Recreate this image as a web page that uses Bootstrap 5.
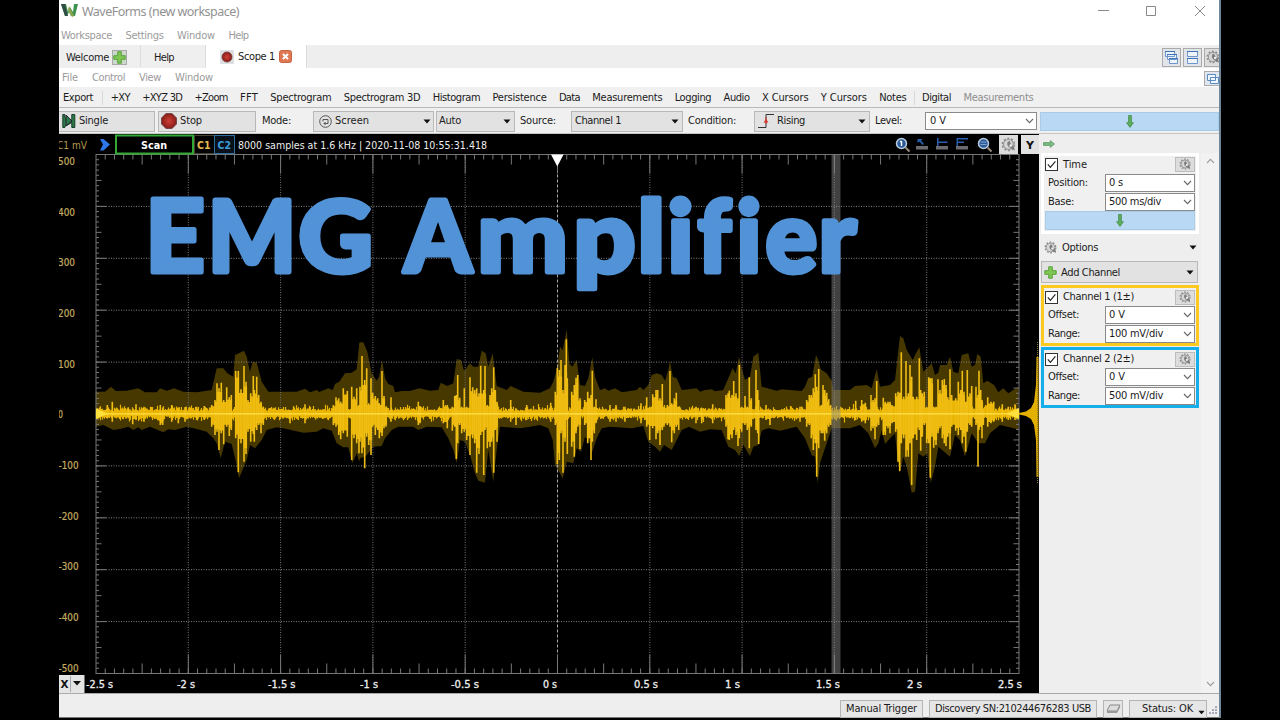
<!DOCTYPE html>
<html lang="en">
<head>
<meta charset="utf-8">
<title>WaveForms (new workspace)</title>
<link href="https://cdn.jsdelivr.net/npm/bootstrap@5.3.0/dist/css/bootstrap.min.css" rel="stylesheet">
<style>
body{background:#000;width:1280px;height:720px;overflow:hidden;font-family:"DejaVu Sans Condensed","DejaVu Sans",sans-serif;font-size:11px;line-height:14px;color:#1b1b1b}
svg{display:block;flex:none}
[data-w]{display:inline-block;flex:none;white-space:nowrap}
.win{width:1162px;height:718px;margin-left:59px;background:#fff;border-right:2px solid #70879a;border-bottom:1px solid #777}
.titlebar{height:25px}
.titlebar .cap{font-family:"Noto Sans",sans-serif;font-size:12.5px;color:#929292}
.menurow{height:20px;color:#9b9b9b}
.tabrow{height:23px;background:#eee}
.tabitem{height:22px;border-right:1px solid #dcdcdc;background:#efefef}
.tabitem.on{background:#fff;height:23px}
.tools{height:21px;background:#f0f0f0;border-bottom:1px solid #b9b9b9;padding-top:2px}
.vsep{width:1px;height:14px;background:#d8d8d8}
.ctl{height:26px;background:#f0f0f0;border-bottom:1px solid #c4c4c4;padding-top:1px}
.pbtn{background:#e2e2e2;border:1px solid #b8b8b8;height:21px}
.field{background:#fff;border:1px solid #8a8a8a;height:18px}
.blue{background:#b9d8f3;border:1px solid #a9cbea}
.scope{width:980px;height:559px;background:#000;color:#fff}
.side{width:180px;background:#eee}
.grp{width:158px;border:3px solid #fff;background:#f0f0f0;padding:1px 1px 0 1px}
.chk{width:13px;height:13px;border:1px solid #333;background:#fff}
.gbtn{width:20px;height:15px;border:1px solid #bdbdbd;background:#ddd}
.statusrow{height:24px;background:#eee;border-top:1px solid #aaa}
.sbtn{height:18px;border:1px solid #b5b5b5;background:#e6e6e6}
</style>
</head>
<body>
<svg width="0" height="0" class="position-absolute">
<defs>
<symbol id="gear" viewBox="0 0 14 14"><circle cx="6.500" cy="6.500" r="4.300" fill="#d6d6d6" stroke="#999" stroke-width="1"/><circle cx="6.500" cy="6.500" r="5.300" fill="none" stroke="#8c8c8c" stroke-width="1.300" stroke-dasharray="1.800 1.530"/><path d="M7.500 3.500C4.500 4 5 8 8 9.500l4 2.500-.5-3.500-2.500-2z" fill="#7c7c7c"/><circle cx="8.500" cy="7.500" r="1.200" fill="#ededed"/></symbol>
<symbol id="caret" viewBox="0 0 8 5"><path d="M.5.5h7L4 4.5z" fill="#111"/></symbol>
<symbol id="chev" viewBox="0 0 9 6"><path d="M1 1l3.5 3.6L8 1" fill="none" stroke="#666" stroke-width="1.1"/></symbol>
<symbol id="down" viewBox="0 0 8 13"><path d="M2.6.5h2.8v7.2h2L4 12.4.6 7.7h2z" fill="#5fae5f" stroke="#39843c" stroke-width=".7"/></symbol>
<symbol id="right" viewBox="0 0 12 8"><path d="M.5 2.6h6.8v-2L11.5 4 7.3 7.4v-2H.5z" fill="#7fb983" stroke="#4d9155" stroke-width=".7"/></symbol>
<symbol id="plus" viewBox="0 0 13 13"><path d="M4.7.8h3.6v3.9h3.9v3.6H8.3v3.9H4.7V8.3H.8V4.7h3.9z" fill="#7fc751" stroke="#4e9c35" stroke-width=".9"/></symbol>
<symbol id="tick" viewBox="0 0 11 11"><path d="M1.8 5.4l2.6 2.9 5-6" fill="none" stroke="#222" stroke-width="1.2"/></symbol>
<radialGradient id="red"><stop offset="0" stop-color="#cc4036"/><stop offset="1" stop-color="#8d1d19"/></radialGradient>
<symbol id="oct" viewBox="0 0 16 16"><path d="M4.9.6h6.2l4.3 4.3v6.2l-4.3 4.3H4.900L.6 11.1V4.9z" fill="url(#red)" stroke="#6d4140" stroke-width="1"/></symbol>
<symbol id="ball" viewBox="0 0 12 12"><circle cx="6" cy="6" r="5" fill="url(#red)" stroke="#6d3a38" stroke-width=".8"/></symbol>
</defs></svg>

<main class="win d-flex flex-column">
  <header class="titlebar d-flex align-items-start">
    <svg width="19" height="17" viewBox="0 0 19 17" style="margin-top:3px"><path d="M2 1h5l2 8 2-5 3 5 1-8h4l-3 12h-4l-2-4-2 4H6z" fill="#3e9150"/><path d="M2 1h4l3 12H6z" fill="#2f4e44"/><path d="M10 3l5 10-2 1-4-7z" fill="#8da74a"/></svg>
    <span class="cap" style="margin:5px 0 0 4px" data-w="157">WaveForms (new workspace)</span>
    <svg width="112" height="20" viewBox="0 0 112 20" class="ms-auto" style="margin-right:9px" fill="none" stroke="#888" stroke-width="1"><path d="M0 10.500h11M48.500 6.500h9v9h-9zM97 6l10 10M107 6l-10 10"/></svg>
  </header>
  <nav class="menurow d-flex align-items-center" style="padding:3px 0 0 2px;gap:13.500px"><span data-w="51">Workspace</span><span data-w="38">Settings</span><span data-w="38">Window</span><span data-w="20">Help</span></nav>
  <div class="tabrow d-flex">
    <div class="tabitem d-flex align-items-center" style="width:82px;padding:4px 0 0 7px;gap:4px"><span data-w="43">Welcome</span><svg width="13" height="13" style="background:#ccd8c8;outline:1px solid #aaa"><use href="#plus"/></svg></div>
    <div class="tabitem d-flex align-items-center" style="width:65px;padding:4px 0 0 13px"><span data-w="20">Help</span></div>
    <div class="tabitem on d-flex align-items-center" style="width:101px;padding:1px 0 0 14px"><span class="border" style="background:#ddd"><svg width="12" height="12"><use href="#ball"/></svg></span><span class="ms-1" data-w="37">Scope 1</span><svg width="13" height="13" viewBox="0 0 13 13" style="margin-left:4px"><rect x=".5" y=".5" width="12" height="12" rx="2" fill="#e07953" stroke="#c76442"/><path d="M4 4l5 5M9 4L4 9" stroke="#fff" stroke-width="2"/></svg></div>
    <div class="ms-auto d-flex align-items-center" style="gap:2px;padding-top:2px">
      <svg width="19" height="19" viewBox="0 0 19 19"><rect x=".5" y=".5" width="18" height="18" fill="#e1e5ea" stroke="#aaa"/><g fill="#eef4fb" stroke="#6d97cc"><path d="M3.500 3.500h9v5h-9zM5.500 6.500h9v5h-9zM7.500 10.500h8v5h-8z"/></g><path d="M3 3.500h10M5 6.500h10M7 10.500h9" stroke="#3f74bb"/></svg>
      <svg width="19" height="19" viewBox="0 0 19 19"><rect x=".5" y=".5" width="18" height="18" fill="#e1e5ea" stroke="#aaa"/><g fill="#eef4fb" stroke="#6d97cc"><path d="M4.500 3.500h10v5h-10zM4.500 10.500h10v5h-10z"/></g><path d="M4 3.500h11M4 10.500h11" stroke="#3f74bb"/></svg>
      <svg width="15" height="19" viewBox="0 0 15 19"><rect x=".5" y=".5" width="18" height="18" fill="#ddd" stroke="#aaa"/><use href="#gear" x="2" y="2" width="15" height="15"/></svg>
    </div>
  </div>
  <nav class="menurow d-flex align-items-center" style="padding:2px 0 0 3px;gap:14px"><span data-w="16">File</span><span data-w="33">Control</span><span data-w="22">View</span><span data-w="38">Window</span>
    <svg class="ms-auto" width="15" height="15" viewBox="0 0 15 15"><rect x=".5" y=".5" width="16" height="14" fill="#dfe6ee" stroke="#aaa"/><path d="M3.500 3.500h8v6h-8zM6.500 6.500h8v6h-8z" fill="#eef6ff" stroke="#5b89c4"/></svg></nav>
  <nav class="tools d-flex align-items-center" style="padding-left:4px;gap:12.4px">
    <span data-w="30">Export</span><span class="vsep" style="margin:0 -5px 0 -3px"></span><span data-w="19">+XY</span><span data-w="40">+XYZ 3D</span><span data-w="33">+Zoom</span><span data-w="18">FFT</span><span data-w="61">Spectrogram</span><span data-w="76.500">Spectrogram 3D</span><span data-w="47.500">Histogram</span><span data-w="54">Persistence</span><span data-w="21">Data</span><span data-w="70">Measurements</span><span data-w="36.500">Logging</span><span data-w="26">Audio</span><span data-w="46.500">X Cursors</span><span data-w="46">Y Cursors</span><span data-w="27">Notes</span><span class="vsep" style="margin:0 -5px 0 -5px"></span><span data-w="29">Digital</span><span data-w="70" style="color:#8d8d8d">Measurements</span>
  </nav>
  <div class="ctl d-flex align-items-center">
    <div class="pbtn d-flex align-items-center border-start-0" style="width:96px;padding-left:3px"><svg width="14" height="16" viewBox="0 0 14 16"><path d="M.8 1.500h2v3l7 4V1.500h3v13h-3v-5l-7 4v1h-2z" fill="#2d7b48" stroke="#183c29"/><path d="M4 2v11l6-5z" fill="#2d7b48" stroke="#223"/></svg><span style="margin-left:3px" data-w="29">Single</span></div>
    <div class="pbtn d-flex align-items-center" style="width:98px;margin-left:3px;padding-left:2px"><svg width="16" height="16"><use href="#oct"/></svg><span style="margin-left:3px" data-w="22">Stop</span></div>
    <span style="margin-left:6px" data-w="29">Mode:</span>
    <div class="pbtn d-flex align-items-center" style="width:121px;margin-left:22px;padding:0 2px 0 5px"><svg width="13" height="13" viewBox="0 0 13 13" fill="none" stroke="#555"><circle cx="6.500" cy="6.500" r="5.800"/><path d="M4 6.500V4.500h5v4H5M6.500 7L5 8.500 6.500 10"/></svg><span style="margin-left:3px" data-w="34">Screen</span><svg class="ms-auto" width="8" height="5"><use href="#caret"/></svg></div>
    <div class="pbtn d-flex align-items-center" style="width:79px;margin-left:2px;padding:0 3px 0 2px"><span data-w="22">Auto</span><svg class="ms-auto" width="8" height="5"><use href="#caret"/></svg></div>
    <span style="margin-left:5px" data-w="36">Source:</span>
    <div class="pbtn d-flex align-items-center" style="width:112px;margin-left:15px;padding:0 3px"><span data-w="46">Channel 1</span><svg class="ms-auto" width="8" height="5"><use href="#caret"/></svg></div>
    <span style="margin-left:5px" data-w="48">Condition:</span>
    <div class="pbtn d-flex align-items-center" style="width:116px;margin-left:18px;padding:0 3px"><svg width="17" height="18" viewBox="0 0 17 18" fill="none"><path d="M0 15.500h8V2.500h8" stroke="#333"/><path d="M8 5v7" stroke="#d23a32" stroke-width="1"/><path d="M5.500 10.500L8 7l2.500 3.500z" fill="#d9342d"/></svg><span style="margin-left:2px" data-w="28">Rising</span><svg class="ms-auto" width="8" height="5"><use href="#caret"/></svg></div>
    <span style="margin-left:5px" data-w="27">Level:</span>
    <div class="field d-flex align-items-center" style="width:112px;margin-left:23px;padding:0 2px 0 4px"><span data-w="16">0 V</span><svg class="ms-auto" width="9" height="6"><use href="#chev"/></svg></div>
    <div class="blue d-flex align-items-center justify-content-center flex-grow-1" style="height:19px;margin-left:3px"><svg width="8" height="13"><use href="#down"/></svg></div>
  </div>
  <section class="d-flex" style="height:559px">
    <div class="scope"><svg id="plot" width="980" height="559" viewBox="59 134 980 559"></svg></div>
    <aside class="side d-flex flex-column">
      <div class="d-flex align-items-center" style="height:19px;padding-left:4px"><svg width="12" height="8"><use href="#right"/></svg></div>
      <div class="d-flex flex-grow-1">
        <div class="d-flex flex-column" style="width:162px;padding-left:2px">
          <div class="grp" style="height:81px"><div class="d-flex align-items-center" style="height:15px"><span class="chk"><svg width="11" height="11"><use href="#tick"/></svg></span><span style="margin-left:5px" data-w="24">Time</span><span class="gbtn ms-auto d-flex justify-content-center"><svg width="13" height="13"><use href="#gear"/></svg></span></div>
            <div class="d-flex align-items-center justify-content-between" style="height:19px;padding-left:3px;margin-top:1px"><span data-w="40">Position:</span><span class="field d-flex align-items-center" style="width:90px;padding:0 2px 0 3px"><span data-w="14">0 s</span><svg class="ms-auto" width="9" height="6"><use href="#chev"/></svg></span></div>
            <div class="d-flex align-items-center justify-content-between" style="height:19px;padding-left:3px"><span data-w="26">Base:</span><span class="field d-flex align-items-center" style="width:90px;padding:0 2px 0 3px"><span data-w="52">500 ms/div</span><svg class="ms-auto" width="9" height="6"><use href="#chev"/></svg></span></div>
            <div class="blue d-flex align-items-center justify-content-center" style="height:19px"><svg width="8" height="13"><use href="#down"/></svg></div></div>
          <div class="d-flex align-items-center" style="height:27px;padding:0 4px 0 3px"><svg width="14" height="14"><use href="#gear"/></svg><span style="margin-left:4px" data-w="36">Options</span><svg class="ms-auto" width="8" height="5"><use href="#caret"/></svg></div>
          <div class="pbtn d-flex align-items-center" style="width:157px;height:22px;padding:1px 3px 0 2px"><svg width="13" height="13"><use href="#plus"/></svg><span style="margin-left:4px" data-w="59">Add Channel</span><svg class="ms-auto" width="8" height="5"><use href="#caret"/></svg></div>
          <div class="grp" style="height:61px;margin-top:2px;border-color:#fbc91f"><div class="d-flex align-items-center" style="height:16px"><span class="chk"><svg width="11" height="11"><use href="#tick"/></svg></span><span style="margin-left:5px" data-w="71">Channel 1 (1±)</span><span class="gbtn ms-auto d-flex justify-content-center"><svg width="13" height="13"><use href="#gear"/></svg></span></div>
            <div class="d-flex align-items-center justify-content-between" style="height:19px;padding-left:3px"><span data-w="31">Offset:</span><span class="field d-flex align-items-center" style="width:90px;padding:0 2px 0 3px"><span data-w="16">0 V</span><svg class="ms-auto" width="9" height="6"><use href="#chev"/></svg></span></div>
            <div class="d-flex align-items-center justify-content-between" style="height:19px;padding-left:3px"><span data-w="32">Range:</span><span class="field d-flex align-items-center" style="width:90px;padding:0 2px 0 3px"><span data-w="54">100 mV/div</span><svg class="ms-auto" width="9" height="6"><use href="#chev"/></svg></span></div></div>
          <div class="grp" style="height:61px;margin-top:1px;border-color:#16aeea"><div class="d-flex align-items-center" style="height:16px"><span class="chk"><svg width="11" height="11"><use href="#tick"/></svg></span><span style="margin-left:5px" data-w="71">Channel 2 (2±)</span><span class="gbtn ms-auto d-flex justify-content-center"><svg width="13" height="13"><use href="#gear"/></svg></span></div>
            <div class="d-flex align-items-center justify-content-between" style="height:19px;padding-left:3px"><span data-w="31">Offset:</span><span class="field d-flex align-items-center" style="width:90px;padding:0 2px 0 3px"><span data-w="16">0 V</span><svg class="ms-auto" width="9" height="6"><use href="#chev"/></svg></span></div>
            <div class="d-flex align-items-center justify-content-between" style="height:19px;padding-left:3px"><span data-w="32">Range:</span><span class="field d-flex align-items-center" style="width:90px;padding:0 2px 0 3px"><span data-w="54">500 mV/div</span><svg class="ms-auto" width="9" height="6"><use href="#chev"/></svg></span></div></div>
        </div>
        <div class="d-flex flex-column justify-content-between align-items-center" style="width:18px;background:#f2f2f2;padding:5px 0 6px"><svg width="9" height="6" opacity=".6" style="transform:scaleY(-1)"><use href="#chev"/></svg><svg width="9" height="6" opacity=".6"><use href="#chev"/></svg></div>
      </div>
    </aside>
  </section>
  <footer class="statusrow d-flex align-items-center justify-content-end" style="padding:6px 1px 0 0">
    <div class="sbtn d-flex align-items-center justify-content-center" style="width:83px;margin-right:6px"><span data-w="71">Manual Trigger</span></div>
    <div class="sbtn d-flex align-items-center justify-content-center" style="width:168px;margin-right:6px"><span data-w="156">Discovery SN:210244676283 USB</span></div>
    <div class="sbtn d-flex align-items-center justify-content-center" style="width:20px;margin-right:6px"><svg width="15" height="10" viewBox="0 0 15 10"><path d="M4 1h10l-3 6H1z" fill="#ddd" stroke="#888"/><path d="M1 7h10v2H1zM11 7l3-6v2.500L11 9z" fill="#999"/></svg></div>
    <div class="sbtn d-flex align-items-center" style="width:78px;padding-left:12px"><span data-w="51">Status: OK</span><svg width="7" height="5" style="margin:7px 0 0 5px"><use href="#caret"/></svg></div>
    <svg width="11" height="12" viewBox="0 0 11 12" fill="#aab"><path d="M8 3h2v2H8zM5 6h2v2H5zM8 6h2v2H8zM2 9h2v2H2zM5 9h2v2H5zM8 9h2v2H8z"/></svg>
  </footer>
</main>
<script src="https://cdn.jsdelivr.net/npm/bootstrap@5.3.0/dist/js/bootstrap.bundle.min.js"></script>
<script>
// Track every label to its column width
document.querySelectorAll('[data-w]').forEach(function(e){
  var w=+e.dataset.w, n=e.textContent.length, r=e.getBoundingClientRect().width;
  e.style.letterSpacing=((w-r)/n).toFixed(3)+'px';
  e.style.width=w+'px';
});
var s='', X0=96, X1=1019, Y0=154.5, Y1=673.5, MID=413.5, i, k;
function line(x1,y1,x2,y2,c,extra){s+='<path d="M'+x1+' '+y1+'L'+x2+' '+y2+'" stroke="'+c+'" '+(extra||'')+'/>';}
function label(x,y,w,t,c,extra){s+='<text x="'+x+'" y="'+y+'" textLength="'+w+'" lengthAdjust="spacingAndGlyphs" fill="'+c+'" '+(extra||'')+'>'+t+'</text>';}
// Envelope and spikes, in thirds of a pixel: [x offset, values]
var top_=[[50,'137,245 165,245 183,230 198,243 230,242 265,235 285,247 320,247 330,235 350,242 372,235 400,245 440,247 485,240 500,175 520,175 532,190 550,200 555,135 582,122 590,140 600,185 608,155 620,158 635,215 655,245 740,245 765,236 780,247 800,240 808,246 835,235 848,240 855,222 868,215 885,190 905,188 920,178 928,98'],
[360,'0,97 10,97 22,125 35,190 50,212 57,200 66,150 75,205 85,222 100,228 105,247 125,243 150,243 178,235 210,242 235,240 242,218 262,228 280,220 290,147 303,150 312,182 330,160 340,170 355,170 365,122 377,130 385,170 398,130 410,228 440,240 452,228 490,245 540,248 570,235 580,215 590,180 600,110 608,120 620,58 628,160 637,170 650,150 660,225 675,228 685,205 697,142 705,200 720,240 735,235 745,242 765,235 785,247 830,240 840,230 850,240 865,225 875,195 890,190 905,195 915,212 925,180 930,152 938,200 950,205 965,240 988,238'],
[690,'0,237 20,235 30,245 45,240 65,238 75,244 100,240 115,205 128,175 137,190 147,140 158,185 165,210 180,200 190,140 205,128 215,230 260,242 275,238 335,243 345,230 355,205 367,200 378,135 385,150 392,178 410,190 425,212 430,240 480,240 495,228 530,225 545,235 560,178 570,230 600,225 615,210 630,78 640,85 650,120 668,150 678,130 688,112 700,185 715,170 725,160 735,195 745,188 750,165 770,165 780,140 790,185 805,190 815,135 835,130 845,170 855,165 862,132 872,140 880,220 892,212 912,225 925,247 940,235 955,250 970,240 985,230']];
var bot_=[[50,'137,350 160,345 190,360 210,357 235,350 250,360 265,352 275,360 300,350 340,367 355,358 375,360 410,350 440,357 470,365 490,385 500,400 512,445 525,395 545,402 560,465 567,505 580,475 590,450 600,405 615,415 635,390 650,360 680,352 700,355 760,368 800,365 820,355 845,362 860,400 880,412 895,412 907,460 920,430 928,455'],
[360,'0,445 15,440 25,430 40,410 65,408 75,385 95,360 115,350 160,350 175,360 200,350 245,352 265,385 280,420 290,460 300,390 315,395 330,435 345,490 355,512 375,518 385,420 400,515 410,420 420,350 480,355 510,350 540,345 565,355 578,390 585,465 600,490 608,505 620,455 640,460 650,415 663,425 675,380 688,395 695,430 710,385 725,355 750,350 815,355 850,348 865,395 885,410 900,425 912,405 935,420 950,390 965,360 988,350'],
[690,'0,352 30,365 60,358 95,360 115,410 135,420 148,438 160,405 180,438 190,410 205,405 215,362 235,355 270,362 320,350 345,385 365,435 375,440 383,520 390,460 405,415 425,355 480,355 510,345 535,370 555,415 565,400 575,360 585,402 600,385 615,370 622,440 629,490 640,440 650,470 665,548 675,545 685,430 700,440 712,430 722,520 735,470 745,410 780,440 795,375 810,390 825,440 845,370 865,400 885,400 900,370 930,345 985,358']];
var bars_=[[50,'172,285,325 187,275,335 235,292,325 248,305,343 258,283,330 282,290,335 331,285,345 338,300,345 365,285,335 385,298,340 405,292,335 440,290,330 463,288,330 485,285,350 495,270,375 501,220,365 507,235,420 514,218,370 521,270,403 530,232,350 538,262,378 544,255,360 557,183,385 565,183,487 573,238,400 582,168,455 588,215,432 594,270,365 602,250,395 610,198,372 613,240,395 620,200,360 626,255,345 633,275,370 640,290,345 720,300,340 765,283,340 850,285,345 858,262,350 866,265,375 872,275,388 880,235,370 892,243,380 905,230,450 912,260,385 920,235,400 927,285,430'],
[360,'0,230,395 6,138,430 14,210,475 20,175,380 26,280,405 33,205,435 38,248,350 46,258,375 53,265,360 58,280,385 66,183,378 72,258,355 78,290,350 93,262,335 175,275,345 180,288,340 250,270,340 262,285,355 277,290,362 284,258,350 289,255,447 293,195,400 299,263,345 305,290,370 313,235,365 320,290,390 330,202,435 338,232,385 344,240,400 350,235,488 357,250,432 362,167,375 371,240,495 375,168,360 382,285,415 390,255,410 395,235,395 401,172,488 406,240,360 411,275,395 452,270,335 468,295,345 500,285,330 572,278,335 586,245,345 592,173,462 598,180,450 603,150,370 609,240,488 615,165,395 619,88,330 622,205,432 635,245,410 643,225,440 648,203,370 653,195,350 660,265,417 674,270,345 683,245,400 688,265,385 693,255,450 697,182,395 703,290,370 708,268,340 750,285,335 768,285,335 795,290,335 843,280,340 860,262,350 869,290,390 878,253,355 888,240,388 893,240,370 900,265,405 907,222,360 912,290,350 922,285,345 930,183,350 935,280,397 943,265,370 949,248,350 956,290,360'],
[690,'18,290,340 35,295,340 68,283,340 108,255,350 114,250,388 118,242,390 126,255,385 131,213,360 138,250,375 144,265,408 148,165,385 155,290,365 165,258,345 172,290,360 178,202,415 184,265,350 198,180,360 203,240,370 206,270,402 228,285,330 240,300,345 330,290,335 350,270,350 358,255,345 364,255,385 370,235,420 376,193,400 380,230,500 386,177,415 394,285,370 399,225,370 404,240,392 410,248,370 416,268,350 422,285,345 497,272,330 515,270,335 526,278,340 543,255,362 549,270,355 555,265,388 560,213,350 566,300,345 580,263,375 586,275,375 594,275,355 600,275,370 606,285,340 617,250,365 624,245,455 629,248,483 634,127,400 641,260,385 648,153,440 655,250,440 660,165,400 665,200,525 670,260,385 680,260,390 688,145,360 692,240,422 697,250,380 703,245,345 710,290,400 716,202,400 721,205,503 726,205,380 731,290,413 738,290,405 744,208,370 750,240,355 757,210,385 763,207,400 768,225,408 773,262,380 780,178,418 785,255,350 797,265,362 805,215,375 812,240,360 817,182,400 822,245,380 827,275,425 832,180,365 840,250,345 845,228,350 858,230,345 864,255,470 867,182,360 872,240,350 876,270,385 880,295,345 893,262,350 903,275,340 911,275,335 937,283,335 955,290,330 975,283,330']];
function conv(a){var r=[];a.forEach(function(g){g[1].split(' ').forEach(function(p){var v=p.split(',').map(Number);r.push([g[0]+v[0]/3].concat(v.slice(1).map(function(y){return 310+y/3;})));});});return r;}
var T=conv(top_),B=conv(bot_),S=conv(bars_);
s+='<g id="env" fill="#473800"><path d="M'+T.concat(B.reverse()).map(function(p){return p[0].toFixed(1)+' '+p[1].toFixed(1);}).join('L')+'Z"/></g>';
// Graticule
for(i=0;i<=10;i++){
  var gx=X0+i*92.3, gy=Y0+i*51.9;
  if(i>0&&i<10){
    line(gx,Y0,gx,Y1,i==5?'#aaa':'#747474','stroke-dasharray="'+(i==5?'3 2':'1 1.5')+'"');
    line(X0,gy,X1,gy,'#858585','stroke-dasharray="1 1.5"');
    line(gx,Y0,gx,Y0+19,'#777');line(gx,Y1,gx,Y1-19,'#777');
    line(X0,gy,X0+10,gy,'#777');line(X1,gy,X1-10,gy,'#777');
  }
}
for(i=1;i<100;i++){var m=i%10==5,x=X0+i*9.23,y=Y0+i*5.19;
  line(x,Y0,x,Y0+(m?10:5),'#777');line(x,Y1,x,Y1-(m?10:5),'#777');
  line(X0,y,X0+(m?5.5:3),y,'#777');line(X1,y,X1-(m?5.5:3),y,'#777');}
s+='<rect x="96" y="154.500" width="923" height="519" fill="none" stroke="#777"/>';
// Signal body: noise floor, widened where spikes crowd together
var d='',seed=7;function rnd(){seed=(seed*16807)%2147483647;return seed/2147483647;}
for(i=96;i<1019;i++){
  var a=MID-2.5-rnd()*rnd()*6-rnd()*1.6,b=MID+2.500+rnd()*rnd()*5+rnd()*1.8;
  for(k=0;k<S.length-1;k++){var p=S[k],q=S[k+1];
    if(p[0]<=i&&q[0]>=i&&q[0]-p[0]<4.1){a=Math.min(a,MID-(MID-Math.max(p[1],q[1]))*.85);b=Math.max(b,MID+(Math.min(p[2],q[2])-MID)*.85);}}
  d+='M'+(i+.5)+' '+a.toFixed(1)+'V'+b.toFixed(1);
}
s+='<path d="'+d+'" stroke="#e9b500" stroke-width="1.2"/>';
d='';S.forEach(function(p){d+='M'+p[0].toFixed(1)+' '+p[1].toFixed(1)+'V'+p[2].toFixed(1);});
s+='<path d="'+d+'" stroke="#efbd14" stroke-width="1.6"/>';
s+='<path d="M96 413.800H1019" stroke="#ffe34a" stroke-width="1.300"/>';
s+='<path d="M96 408.500V419l12-5.200zM1019 408v11l-13-5.200z" fill="#ffe03c"/>';
s+='<path d="M1019 413L1026 411.500 1031 408 1034 402 1036 385 1036.500 357H1038.500V477H1036.500L1036 440 1034 425 1031 419 1026 416 1019 414.500Z" fill="#e4b000"/><path d="M1037.500 342V484" stroke="#8b792e" stroke-dasharray="1 1"/>';
s+='<rect x="831.500" y="155" width="9" height="518" fill="#8a8a8a" fill-opacity=".47"/>';
s+='<path d="M551 154.500h12.500l-6.200 12z" fill="#fff"/>';
// Header strip
label(57,148.500,30,'C1 mV','#b59a4e');
s+='<path d="M100 139l3.500 0 6.500 5.500-6.500 6h-3.500l3-6z" fill="#2d77e8"/>';
s+='<rect x="116" y="135.500" width="77" height="18" fill="#000" stroke="#31a934" stroke-width="2"/>';
label(141,148.500,26,'Scan','#fff','font-weight="bold"');
s+='<rect x="194.500" y="135.500" width="20" height="18" fill="none" stroke="#464330"/><rect x="214.500" y="135.500" width="20" height="18" fill="#08111a" stroke="#2c6f9e"/>';
label(197,148.500,13.5,'C1','#e5b94f','font-weight="bold"');label(217.500,148.500,13.5,'C2','#3e9bd6','font-weight="bold"');
label(238,148.500,249,'8000 samples at 1.6 kHz | 2020-11-08 10:55:31.418','#eee');
function lens(x){s+='<circle cx="'+x+'" cy="143.500" r="5" fill="#2c5b98" stroke="#b9cce0" stroke-width="1.500"/><path d="M'+(x+4)+' 147.500l4 4" stroke="#998b7c" stroke-width="2"/>';}
lens(901.5);s+='<path d="M901.500 141v5M900 142l1.500-1" stroke="#fff" stroke-width="1.400"/>';
lens(983.5);s+='<path d="M980.500 142h6M980.500 144.500h6" stroke="#7fa5d3"/>';
s+='<path d="M916 146h12v3.500h-12zM936 146h12v3.500h-12zM956 146h12v3.500h-12z" fill="#6c6c70"/><path d="M917.500 139h5l-1.500 1.500 3 3.500-1.500 1-3-3.500-2 1.500zM937 138v8h1.500v-3h9v-1.500h-9v-3.500zM956.500 138v8h1.500v-3h6v-1.500h-6v-2h10v-1.500z" fill="#2b5fae"/>';
s+='<rect x="999" y="135" width="19" height="19" fill="#ddd"/><use href="#gear" x="1001" y="137" width="16" height="16"/><rect x="1021" y="135" width="18" height="19" fill="#e2e2e2"/>';
label(1026,149,8,'Y','#111','font-weight="bold"');
[['500',58,17],['400',58,17],['300',58,17],['200',58,17],['100',58,17],['0',58,5],['-100',58.500,20],['-200',58.500,20],['-300',58.500,20],['-400',58.500,20],['-500',58.500,20]].forEach(function(v,j){label(v[1],165+j*50.650,v[2],v[0],'#c5ac62','stroke="#c5ac62" stroke-width=".2"');});
[['-2.5 s',86,27],['-2 s',177,18],['-1.5 s',268,27.500],['-1 s',360,18],['-0.5 s',451,28],['0 s',543,14],['0.5 s',634,24],['1 s',725,15],['1.5 s',816,24],['2 s',907,15],['2.5 s',998,24]].forEach(function(v){label(v[1],688,v[2],v[0],'#eee','stroke="#eee" stroke-width=".3"');});
s+='<rect x="59" y="675" width="25.500" height="18" fill="#e4e4e4"/><path d="M70.500 676v16" stroke="#aaa"/><path d="M73 681h8l-4 4.500z" fill="#111"/>';
label(60.500,688,8,'X','#111','font-weight="bold"');
// Caption: each letter has its own left edge and width factor
s+='<g font-family="Lato" font-weight="900" font-size="100" fill="#5293d8" stroke="#5293d8" stroke-width="5" stroke-linejoin="round">';
[['E',150,204],['M',212,292],['G',299,371],['A',401,476],['m',480,566],['p',576,635],['l',640,662],['i',669,692],['f',696,734],['i',738,760],['e',765,817],['r',821,859]].forEach(function(v){
  s+='<text class="glyph" data-l="'+v[1]+'" data-r="'+v[2]+'">'+v[0]+'</text>';});
s+='</g>';
document.getElementById('plot').innerHTML=s;
var cv=document.createElement('canvas').getContext('2d');
cv.font='900 100px Lato';
document.querySelectorAll('.glyph').forEach(function(g){
  var m=cv.measureText(g.textContent), l=+g.dataset.l, r=+g.dataset.r, w=m.actualBoundingBoxRight+m.actualBoundingBoxLeft, k=(r-l)/(w+5);
  g.setAttribute('transform','translate('+(l+(m.actualBoundingBoxLeft+2.5)*k)+' 272) scale('+k+' 1)');
});
</script>
</body>
</html>
